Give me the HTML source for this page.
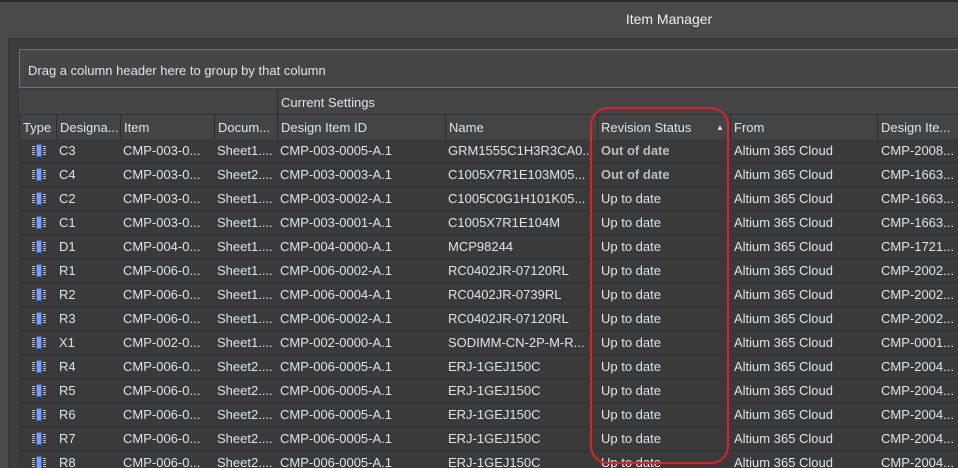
<!DOCTYPE html><html><head><style>
html,body{margin:0;width:958px;height:468px;overflow:hidden}
body{background:#4a4a4a;font-family:"Liberation Sans",sans-serif;font-size:13px;color:#dde4ee;position:relative}
.top{position:absolute;left:0;top:0;width:958px;height:2px;background:#2a2a2a}
.title{position:absolute;left:0;top:0;width:958px;height:38px;text-align:center;line-height:38px;padding-left:380px;box-sizing:border-box;color:#eee;font-size:14px}
.panel{position:absolute;left:8px;top:38px;width:960px;height:440px;background:#3d3d3d;border:1px solid #333}
.group{position:absolute;left:19px;top:49px;width:950px;height:39px;background:#454545;border:1px solid #6a7480;line-height:42px;padding-left:8px;box-sizing:border-box}
.h1{position:absolute;left:19px;top:90px;width:940px;height:24px;background:#444;border-bottom:1px solid #333}
.hdr{position:absolute;top:115px;height:24px;background:#444;border-left:1px solid #2e2e2e;line-height:26px;padding-left:3px;box-sizing:border-box;white-space:nowrap;overflow:hidden}
.row{position:absolute;left:19px;width:940px;height:24px;background:#3a3a3a;border-bottom:1px solid #303030;box-sizing:border-box}
.c{position:absolute;top:0;line-height:24px;white-space:nowrap;overflow:hidden}
.ic{position:absolute;left:17px;top:5px;width:6px;height:13px;background:#7a9ef0;border:1px solid #3c5db8;box-sizing:border-box}
.ic:before,.ic:after{content:"";position:absolute;top:1px;width:3px;height:10px;background:repeating-linear-gradient(#bbb 0 1px,transparent 1px 2px)}
.ic:before{left:-5px}.ic:after{right:-5px}
b{color:#b8bcc4}
.red{position:absolute;left:590px;top:107px;width:135px;height:353px;border:2px solid #e0202a;border-radius:18px}
</style></head><body>
<div class="top"></div>
<div class="title">Item Manager</div>
<div class="panel"></div>
<div class="group">Drag a column header here to group by that column</div>
<div class="h1"><div style="position:absolute;left:258px;top:0;height:24px;border-left:1px solid #2e2e2e;line-height:26px;padding-left:3px">Current Settings</div></div>
<div class="hdr" style="left:19px;width:37px">Type</div>
<div class="hdr" style="left:56px;width:64px">Designa...</div>
<div class="hdr" style="left:120px;width:94px">Item</div>
<div class="hdr" style="left:214px;width:63px">Docum...</div>
<div class="hdr" style="left:277px;width:168px">Design Item ID</div>
<div class="hdr" style="left:445px;width:152px">Name</div>
<div class="hdr" style="left:597px;width:133px">Revision Status<span style="position:absolute;left:118px;top:0;font-size:8px">▲</span></div>
<div class="hdr" style="left:730px;width:147px">From</div>
<div class="hdr" style="left:877px;width:81px">Design Ite...</div>
<div id="rows"></div>
<div class="red"></div>
<script>
var d=[["C3","CMP-003-0...","Sheet1....","CMP-003-0005-A.1","GRM1555C1H3R3CA0...",1,"CMP-2008..."],
["C4","CMP-003-0...","Sheet2....","CMP-003-0003-A.1","C1005X7R1E103M05...",1,"CMP-1663..."],
["C2","CMP-003-0...","Sheet1....","CMP-003-0002-A.1","C1005C0G1H101K05...",0,"CMP-1663..."],
["C1","CMP-003-0...","Sheet1....","CMP-003-0001-A.1","C1005X7R1E104M",0,"CMP-1663..."],
["D1","CMP-004-0...","Sheet1....","CMP-004-0000-A.1","MCP98244",0,"CMP-1721..."],
["R1","CMP-006-0...","Sheet1....","CMP-006-0002-A.1","RC0402JR-07120RL",0,"CMP-2002..."],
["R2","CMP-006-0...","Sheet1....","CMP-006-0004-A.1","RC0402JR-0739RL",0,"CMP-2002..."],
["R3","CMP-006-0...","Sheet1....","CMP-006-0002-A.1","RC0402JR-07120RL",0,"CMP-2002..."],
["X1","CMP-002-0...","Sheet1....","CMP-002-0000-A.1","SODIMM-CN-2P-M-R...",0,"CMP-0001..."],
["R4","CMP-006-0...","Sheet2....","CMP-006-0005-A.1","ERJ-1GEJ150C",0,"CMP-2004..."],
["R5","CMP-006-0...","Sheet2....","CMP-006-0005-A.1","ERJ-1GEJ150C",0,"CMP-2004..."],
["R6","CMP-006-0...","Sheet2....","CMP-006-0005-A.1","ERJ-1GEJ150C",0,"CMP-2004..."],
["R7","CMP-006-0...","Sheet2....","CMP-006-0005-A.1","ERJ-1GEJ150C",0,"CMP-2004..."],
["R8","CMP-006-0...","Sheet2....","CMP-006-0005-A.1","ERJ-1GEJ150C",0,"CMP-2004..."]];
var h="";d.forEach(function(r,i){h+='<div class="row" style="top:'+(139+i*24)+'px"><div class="ic"></div>'+
'<div class="c" style="left:40px">'+r[0]+'</div><div class="c" style="left:104px">'+r[1]+'</div><div class="c" style="left:198px">'+r[2]+'</div><div class="c" style="left:261px">'+r[3]+'</div><div class="c" style="left:429px;width:148px">'+r[4]+'</div><div class="c" style="left:582px">'+(r[5]?'<b>Out of date</b>':'Up to date')+'</div><div class="c" style="left:715px">Altium 365 Cloud</div><div class="c" style="left:862px">'+r[6]+'</div></div>'});
document.getElementById("rows").innerHTML=h;
</script>
</body></html>
